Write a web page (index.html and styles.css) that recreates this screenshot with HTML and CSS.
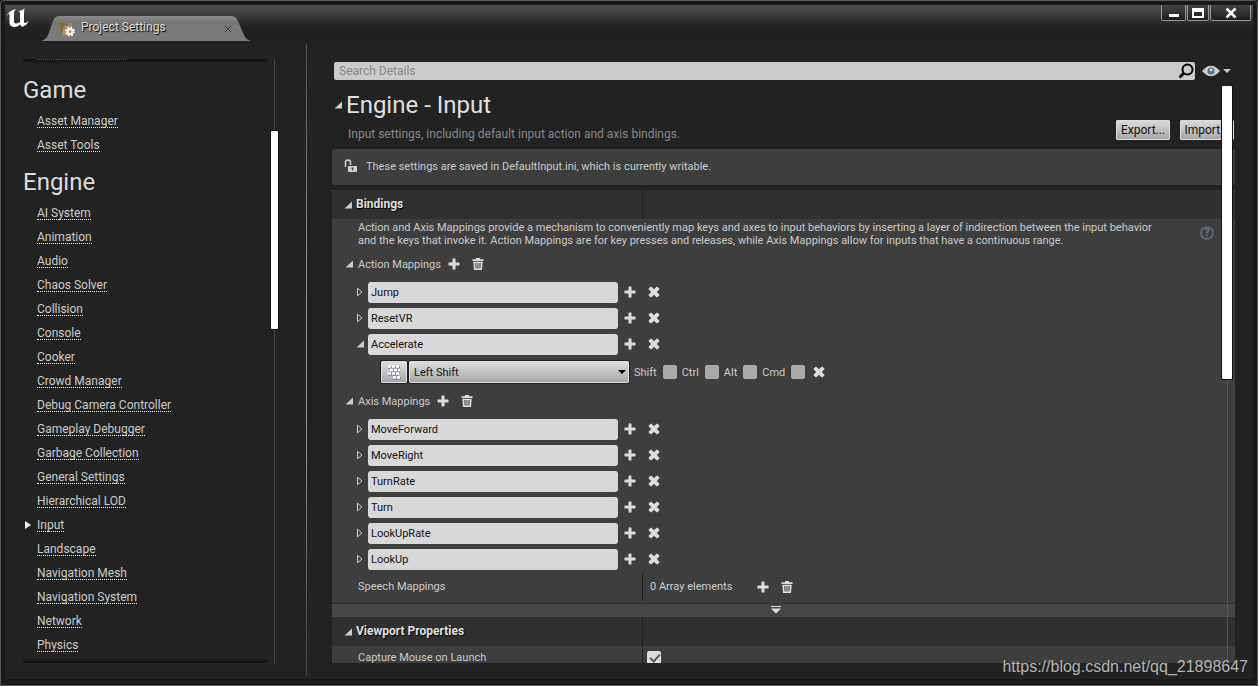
FILE: index.html
```html
<!DOCTYPE html>
<html lang="en">
<head>
<meta charset="utf-8">
<title>Project Settings</title>
<link rel="stylesheet" href="styles.css">
</head>
<body>
<svg class="sprite" aria-hidden="true">
  <symbol id="plus" viewBox="0 0 12 12"><path d="M4.500 1q0-.5.5-.5h2q.5 0 .5.500v3.500H11q.5 0 .5.500v2q0 .5-.5.500H7.500V11q0 .5-.5.500H5q-.5 0-.5-.5V7.500H1Q.5 7.500.5 7V5q0-.5.5-.5h3.500z"/></symbol>
  <symbol id="cross" viewBox="0 0 12 12"><path d="M.7 2.500 2.500.8h1L6 3.300 8.500.8h1l1.800 1.700v1L8.800 6l2.500 2.500v1l-1.800 1.700h-1L6 8.700l-2.500 2.500h-1L.7 9.500v-1L3.200 6 .7 3.500z"/></symbol>
  <symbol id="trash" viewBox="0 0 12 12"><path d="M4 0h4v1.200h3.500V3H.5V1.200H4zM1.300 3.800h9.400L10 12H2zM3.300 5l.3 5.500h1L4.400 5zM5.500 5v5.500h1V5zM7.600 5l-.2 5.500h1L8.700 5z" fill-rule="evenodd"/></symbol>
  <symbol id="open" viewBox="0 0 8 8"><path d="M8 0.500v7H0.500z"/></symbol>
  <symbol id="closed" viewBox="0 0 8 10"><path d="M1.500 1.200v7.600L6 5z" fill="none" stroke="currentColor"/></symbol>
</svg>
<div class="window">
  <header class="titlebar">
    <svg class="logo" viewBox="0 0 24 20" role="img" aria-label="Unreal"><path d="M0 9Q3 2 10 1 8 2.500 8 5v8.500q0 2 1.800 2T14 14V5q0-1.500-1.500-2Q16 2.500 18.500.5 18 3 18 5v8.500q0 1.500 1 1.500 1.300 0 3.500-2-1.500 4.500-6.500 6L14 16.500Q11.500 19 8 19q-4.500-.5-4.500-4V6.500Q3.500 5 2.500 6 1.500 6.500 0 9z"/></svg>
    <div class="tab">
      <svg class="tab-shape" viewBox="0 0 210 25" preserveAspectRatio="none" aria-hidden="true"><defs><linearGradient id="tabfill" x2="0" y2="1"><stop stop-color="#8c8c8c"/><stop offset=".25" stop-color="#767676"/><stop offset="1" stop-color="#7c7c7c"/></linearGradient></defs><path d="M0 25Q5 24 7 19L12 5Q14 0 18 0H190Q195 0 197 5L203 19Q205 24 210 25z" fill="url(#tabfill)"/></svg>
      <svg class="tab-icon" viewBox="0 0 16 16" aria-hidden="true"><path d="M0 1h3l1 1h9v6l-2 6H3z" fill="#b0905f"/><path d="M0 1 3 14l2-9 8-2" fill="#86683e"/><path d="M5 5h8v5H4z" fill="#a98b5d"/><circle cx="11" cy="10.500" r="4" fill="none" stroke="#fff" stroke-width="1.800" stroke-dasharray="1.800 1.340"/><circle cx="11" cy="10.500" r="2.500" fill="none" stroke="#fff" stroke-width="2"/></svg>
      <span class="tab-name">Project Settings</span>
      <button class="tab-close" aria-label="Close tab"><svg viewBox="0 0 6 6"><path d="M0 0 6 6M6 0 0 6" stroke="#444"/></svg></button>
    </div>
    <div class="window-buttons">
      <button aria-label="Minimize"><svg viewBox="0 0 14 12"><path d="M2 7h10v3H2z"/></svg></button>
      <button class="narrow" aria-label="Maximize"><svg viewBox="0 0 14 12"><path d="M1 1h12v10H1zM3 5v4h8V5z" fill-rule="evenodd"/></svg></button>
      <button class="wide" aria-label="Close"><svg viewBox="0 0 14 12"><path d="M2.500 1.500l9 9M11.500 1.500l-9 9" stroke="#fff" stroke-width="2.500"/></svg></button>
    </div>
  </header>
  <div class="content">
    <nav class="sidebar">
      <div class="nav-list">
        <div class="nav-scroll">
          <ul><li><a href="#">Target Hardware</a></li></ul>
          <h2>Game</h2>
          <ul>
            <li><a href="#">Asset Manager</a></li>
            <li><a href="#">Asset Tools</a></li>
          </ul>
          <h2>Engine</h2>
          <ul>
            <li><a href="#">AI System</a></li>
            <li><a href="#">Animation</a></li>
            <li><a href="#">Audio</a></li>
            <li><a href="#">Chaos Solver</a></li>
            <li><a href="#">Collision</a></li>
            <li><a href="#">Console</a></li>
            <li><a href="#">Cooker</a></li>
            <li><a href="#">Crowd Manager</a></li>
            <li><a href="#">Debug Camera Controller</a></li>
            <li><a href="#">Gameplay Debugger</a></li>
            <li><a href="#">Garbage Collection</a></li>
            <li><a href="#">General Settings</a></li>
            <li><a href="#">Hierarchical LOD</a></li>
            <li class="current"><a href="#" aria-current="page">Input</a></li>
            <li><a href="#">Landscape</a></li>
            <li><a href="#">Navigation Mesh</a></li>
            <li><a href="#">Navigation System</a></li>
            <li><a href="#">Network</a></li>
            <li><a href="#">Physics</a></li>
          </ul>
        </div>
      </div>
      <div class="track"><div class="thumb"></div></div>
    </nav>
    <main class="details">
      <div class="search-row">
        <div class="search">
          <input type="search" placeholder="Search Details" aria-label="Search Details">
          <svg viewBox="0 0 16 16" aria-hidden="true"><circle cx="9.500" cy="6.500" r="5" fill="none" stroke="#000" stroke-width="2"/><path d="M6 10 1.500 14.500" stroke="#000" stroke-width="3"/></svg>
        </div>
        <button class="view" aria-label="View options">
          <svg class="eye" viewBox="0 0 18 12"><path d="M0 6Q9-4.500 18 6 9 16.500 0 6z" fill="#ccc"/><circle cx="9" cy="6" r="3.500" fill="#5b7394"/><circle cx="9" cy="5" r="1.300" fill="#dde"/></svg>
          <svg class="caret" viewBox="0 0 8 4"><path d="M0 0h8L4 4z" fill="#ccc"/></svg>
        </button>
      </div>
      <div class="scroller">
        <section class="intro">
          <div>
            <h1><svg class="arrow" aria-hidden="true"><use href="#open"/></svg>Engine - Input</h1>
            <p>Input settings, including default input action and axis bindings.</p>
          </div>
          <div class="actions">
            <button>Export...</button>
            <button>Import...</button>
          </div>
        </section>
        <div class="notice">
          <svg viewBox="0 0 14 14" aria-hidden="true"><path d="M1.500 8V3.500Q1.500 1 4 1T6.500 3.500V6" fill="none" stroke="#d0d0d0" stroke-width="1.500"/><path d="M4 7h9v6H4zM7.500 8.500V10H8v1.500h1V10h.5V8.500z" fill="#d0d0d0" fill-rule="evenodd"/></svg>
          These settings are saved in DefaultInput.ini, which is currently writable.
        </div>
        <section>
          <h3><span><svg class="arrow" aria-hidden="true"><use href="#open"/></svg>Bindings</span></h3>
          <div class="help">
            <p>Action and Axis Mappings provide a mechanism to conveniently map keys and axes to input behaviors by inserting a layer of indirection between the input behavior and the keys that invoke it. Action Mappings are for key presses and releases, while Axis Mappings allow for inputs that have a continuous range.</p>
            <button aria-label="Help">?</button>
          </div>
          <div class="group">
            <svg class="arrow" aria-hidden="true"><use href="#open"/></svg><span>Action Mappings</span>
            <button class="icon" aria-label="Add action"><svg><use href="#plus"/></svg></button>
            <button class="icon" aria-label="Clear actions"><svg><use href="#trash"/></svg></button>
          </div>
          <div class="mapping"><svg class="closed"><use href="#closed"/></svg><input aria-label="Action name" value="Jump"><button class="icon" aria-label="Add"><svg><use href="#plus"/></svg></button><button class="icon" aria-label="Remove"><svg><use href="#cross"/></svg></button></div>
          <div class="mapping"><svg class="closed"><use href="#closed"/></svg><input aria-label="Action name" value="ResetVR"><button class="icon" aria-label="Add"><svg><use href="#plus"/></svg></button><button class="icon" aria-label="Remove"><svg><use href="#cross"/></svg></button></div>
          <div class="mapping"><svg class="arrow" aria-hidden="true"><use href="#open"/></svg><input aria-label="Action name" value="Accelerate"><button class="icon" aria-label="Add"><svg><use href="#plus"/></svg></button><button class="icon" aria-label="Remove"><svg><use href="#cross"/></svg></button></div>
          <div class="key">
            <button class="capture" aria-label="Capture key"><svg viewBox="0 0 16 16"><path d="M2 3.500h12M4 7h10M2 10.500h11M7 14.500h8" stroke="#8793a0" stroke-width="3"/><path d="M2 2.500h12M4 6h10M2 9.500h11M7 13.500h8" stroke="#fff" stroke-width="2.500" stroke-dasharray="3 1"/></svg></button>
            <div class="select"><select aria-label="Key"><option>Left Shift</option></select><svg viewBox="0 0 8 4" aria-hidden="true"><path d="M0 0h8L4 4z"/></svg></div>
            <label>Shift <input type="checkbox"></label>
            <label>Ctrl <input type="checkbox"></label>
            <label>Alt <input type="checkbox"></label>
            <label>Cmd <input type="checkbox"></label>
            <button class="icon" aria-label="Remove"><svg><use href="#cross"/></svg></button>
          </div>
          <div class="group">
            <svg class="arrow" aria-hidden="true"><use href="#open"/></svg><span>Axis Mappings</span>
            <button class="icon" aria-label="Add axis"><svg><use href="#plus"/></svg></button>
            <button class="icon" aria-label="Clear axes"><svg><use href="#trash"/></svg></button>
          </div>
          <div class="mapping"><svg class="closed"><use href="#closed"/></svg><input aria-label="Axis name" value="MoveForward"><button class="icon" aria-label="Add"><svg><use href="#plus"/></svg></button><button class="icon" aria-label="Remove"><svg><use href="#cross"/></svg></button></div>
          <div class="mapping"><svg class="closed"><use href="#closed"/></svg><input aria-label="Axis name" value="MoveRight"><button class="icon" aria-label="Add"><svg><use href="#plus"/></svg></button><button class="icon" aria-label="Remove"><svg><use href="#cross"/></svg></button></div>
          <div class="mapping"><svg class="closed"><use href="#closed"/></svg><input aria-label="Axis name" value="TurnRate"><button class="icon" aria-label="Add"><svg><use href="#plus"/></svg></button><button class="icon" aria-label="Remove"><svg><use href="#cross"/></svg></button></div>
          <div class="mapping"><svg class="closed"><use href="#closed"/></svg><input aria-label="Axis name" value="Turn"><button class="icon" aria-label="Add"><svg><use href="#plus"/></svg></button><button class="icon" aria-label="Remove"><svg><use href="#cross"/></svg></button></div>
          <div class="mapping"><svg class="closed"><use href="#closed"/></svg><input aria-label="Axis name" value="LookUpRate"><button class="icon" aria-label="Add"><svg><use href="#plus"/></svg></button><button class="icon" aria-label="Remove"><svg><use href="#cross"/></svg></button></div>
          <div class="mapping"><svg class="closed"><use href="#closed"/></svg><input aria-label="Axis name" value="LookUp"><button class="icon" aria-label="Add"><svg><use href="#plus"/></svg></button><button class="icon" aria-label="Remove"><svg><use href="#cross"/></svg></button></div>
          <div class="property">
            <span class="name">Speech Mappings</span>
            <span class="value array"><span>0 Array elements</span>
              <button class="icon" aria-label="Add speech mapping"><svg><use href="#plus"/></svg></button>
              <button class="icon" aria-label="Clear speech mappings"><svg><use href="#trash"/></svg></button>
            </span>
          </div>
          <button class="expand" aria-label="Show advanced"><svg viewBox="0 0 12 8"><path d="M1 0h10v1H1zM1 2.500h10L6 7.500z" fill="#e0e0e0"/></svg></button>
        </section>
        <section>
          <h3><span><svg class="arrow" aria-hidden="true"><use href="#open"/></svg>Viewport Properties</span></h3>
          <div class="property">
            <label class="name" for="capture-mouse">Capture Mouse on Launch</label>
            <span class="value"><input type="checkbox" id="capture-mouse" checked></span>
          </div>
        </section>
        <div class="track"><div class="thumb"></div></div>
      </div>
    </main>
  </div>
  <div class="watermark">https://blog.csdn.net/qq_21898647</div>
</div>
</body>
</html>
```
FILE: styles.css
```css
*, *::before, *::after { box-sizing: border-box; }
body { margin: 0; font: 11px/13px Roboto, "Liberation Sans", sans-serif; color: #ccc; background: #191919; }
h1, h2, h3, p, ul { margin: 0; padding: 0; font-weight: 400; }
ul { list-style: none; }
svg { display: block; flex: none; fill: currentColor; }
button, input, select { margin: 0; padding: 0; border: 0; font: inherit; color: inherit; background: none; }
.sprite { display: none; }

.window { position: relative; display: flex; flex-direction: column; height: 100vh; padding: 4px 4px 6px; border: 1px solid #5a5a5a; border-radius: 4px 4px 0 0; background: #191919; }

/* Title bar */
.titlebar { display: flex; flex: none; height: 36px; background: linear-gradient(#505050, #3a3a3a 30%, #222 60%, #1e1e1e); }
.logo { width: 24px; height: 20px; margin: 3px 0 0 1px; color: #fff; }
.tab { position: relative; display: flex; align-items: center; width: 210px; height: 25px; margin: 11px 0 0 11px; padding: 0 18px; }
.tab-shape { position: absolute; inset: 0; width: 100%; height: 100%; }
.tab-icon { position: relative; width: 16px; height: 16px; }
.tab-name { position: relative; flex: 1; padding: 0 0 3px 6px; font-size: 12px; color: #ddd; text-shadow: 1px 1px 1px #000; }
.tab-close { position: relative; width: 10px; height: 10px; padding: 2px; }
.tab-close svg { width: 6px; height: 6px; }
.window-buttons { display: flex; gap: 1px; height: 16px; margin: 0 2px 0 auto; }
.window-buttons button { display: flex; align-items: center; justify-content: center; width: 25px; border: 1px solid #999; border-top: 0; border-radius: 0 0 2px 2px; color: #fff; background: linear-gradient(#444, #333 50%, #1c1c1c); }
.window-buttons .narrow { width: 22px; }
.window-buttons .wide { width: 41px; }
.window-buttons svg { width: 14px; height: 12px; }

.content { display: flex; flex: 1; min-height: 0; background: #222; }

/* Section list */
.sidebar { display: flex; flex: none; gap: 2px; width: 302px; padding: 18px 28px 16px 18px; background: linear-gradient(#555, #999 40%, #999 60%, #444) right center / 1px calc(100% - 6px) no-repeat; }
.nav-list { position: relative; flex: 1; overflow: hidden; }
.nav-list::before, .nav-list::after { content: ""; position: absolute; left: 0; right: 0; height: 5px; opacity: .8; }
.nav-list::before { top: 0; background: linear-gradient(#0c0c0c, transparent); }
.nav-list::after { bottom: 0; background: linear-gradient(transparent, #0c0c0c); }
.nav-scroll { margin-top: -18px; }
.nav-scroll h2 { padding: 10px 0 4px; font-size: 24px; line-height: 30px; color: #ddd; }
.nav-scroll li { display: flex; height: 24px; padding: 4px 0 5px 14px; }
.nav-scroll a { height: 15px; border-bottom: 1px dotted #eee; font-size: 12px; line-height: 16px; color: #ccc; text-decoration: none; }
.nav-scroll .current { padding-left: 2px; gap: 6px; }
.nav-scroll .current::before { content: ""; height: 8px; margin-top: 4px; border: solid transparent; border-width: 4px 0 4px 6px; border-left-color: #eee; }
.track { width: 9px; background: linear-gradient(#444, #444) center / 1px 100% no-repeat; }
.thumb { background: #fff; border-radius: 1px; box-shadow: 0 0 0 1px #111; }
.sidebar .track { padding-top: 72px; }
.sidebar .thumb { width: 7px; height: 198px; margin: 0 1px; }

/* Details panel */
.details { display: flex; flex: 1; flex-direction: column; min-width: 0; padding: 21px 18px 16px 25px; }
.search-row { display: flex; gap: 7px; height: 18px; padding-left: 2px; padding-right: 4px; }
.search { display: flex; flex: 1; align-items: center; padding: 0 1px 0 5px; border-radius: 2px; background: #cbcbcb; }
.search input { flex: 1; outline: 0; font-size: 12px; color: #222; }
.search input::placeholder { color: #888; opacity: 1; }
.search svg { width: 16px; height: 16px; }
.view { display: flex; align-items: center; gap: 3px; }
.eye { width: 18px; height: 12px; }
.caret { width: 8px; height: 4px; }
.scroller { position: relative; flex: 1; overflow: hidden; margin-top: 6px; }
.scroller .track { position: absolute; top: 0; right: 3px; width: 10px; height: 100%; background-image: linear-gradient(#555, #555); }
.scroller .thumb { height: 293px; }
.arrow { width: 8px; height: 8px; color: #ccc; }

.intro { display: flex; justify-content: space-between; height: 63px; padding: 4px 1px 0 2px; }
.intro h1 { display: flex; align-items: center; gap: 4px; font-size: 24px; line-height: 30px; color: #e0e0e0; }
.intro p { padding: 7px 0 0 14px; font-size: 12px; line-height: 14px; color: #888; }
.actions { display: flex; align-items: flex-end; gap: 10px; padding-bottom: 9px; }
.actions button { width: 54px; height: 20px; border: 1px solid #ddd; border-radius: 1px; font-size: 12px; color: #111; background: linear-gradient(#d8d8d8, #a9a9a9); white-space: nowrap; }
.notice { display: flex; align-items: center; gap: 8px; height: 36px; margin-bottom: 5px; padding: 0 0 2px 12px; border-radius: 3px; background: #3e3e3e; }
.notice svg { width: 14px; height: 14px; }

section h3 { height: 29px; border-radius: 3px 3px 0 0; background: #303030; font-size: 12px; font-weight: 700; color: #e0e0e0; text-shadow: 1px 1px 1px #000; }
section h3 span { display: flex; align-items: center; gap: 4px; width: 311px; height: 29px; padding-left: 12px; border-right: 1px solid #222; }
.scroller section:not(.intro) { background: #3e3e3e; }
.help { display: flex; justify-content: space-between; gap: 20px; height: 31px; padding: 2px 21px 0 26px; }
.help p { max-width: 808px; }
.help button { width: 14px; height: 14px; margin-top: 5px; border: 2px solid #5c6472; border-radius: 50%; font-weight: 700; line-height: 10px; color: #778; }
.group { display: flex; align-items: center; height: 29px; padding-left: 13px; }
.group span { padding: 0 7px 0 5px; }
.group .arrow, .group .icon { margin-bottom: 2px; }
.icon { width: 12px; height: 12px; color: #ddd; }
.icon svg { width: 12px; height: 12px; }
.icon + .icon { margin-left: 12px; }
.mapping { display: flex; align-items: center; height: 26px; padding-left: 24px; }
.mapping input { width: 250px; height: 21px; margin: 0 6px 0 4px; padding: 0 3px; border-radius: 3px; color: #111; background: #d8d8d8; }
.mapping .closed { width: 8px; height: 10px; }
.key { display: flex; align-items: center; height: 30px; padding-left: 49px; gap: 5px; }
.key .capture, .select select { height: 22px; border: 1px solid #ddd; border-radius: 1px; outline: 1px solid #222; background: linear-gradient(#ddd, #a8a8a8); }
.key .capture { width: 26px; padding: 0 4px; margin-right: -3px; }
.capture svg { width: 16px; height: 16px; }
.select { position: relative; width: 220px; }
.select select { appearance: none; width: 100%; padding-left: 4px; color: #111; }
.select svg { position: absolute; right: 3px; top: 9px; width: 8px; height: 4px; color: #000; pointer-events: none; }
.key label { display: flex; align-items: center; gap: 6px; }
.key .icon { margin-left: 3px; }
input[type="checkbox"] { appearance: none; width: 14px; height: 14px; border-radius: 2px; background: #aaa; }
input[type="checkbox"]:checked { background: #ddd; }
input[type="checkbox"]:checked::before { content: ""; display: block; width: 6px; height: 10px; margin: 1px 0 0 5px; border: solid #555; border-width: 0 2px 2px 0; transform: rotate(42deg); }
.property { display: flex; align-items: center; height: 29px; padding-left: 26px; }
.property .name { width: 284px; }
.property .value { display: flex; align-items: center; height: 28px; padding-left: 4px; border-left: 1px solid #222; }
.property .array { padding-left: 7px; }
.array > span { padding-right: 25px; }
section:last-of-type .property { height: 23px; }
.expand { display: flex; align-items: center; justify-content: center; width: 100%; height: 14px; margin-top: 2px; padding: 0 15px 2px 0; border-top: 1px solid #303030; background: #474747; }
.expand svg { width: 12px; height: 8px; }

.watermark { position: absolute; right: 9px; bottom: 8px; font: 16px/20px "Liberation Sans", Arial, sans-serif; color: #b5b5b5; }
```
